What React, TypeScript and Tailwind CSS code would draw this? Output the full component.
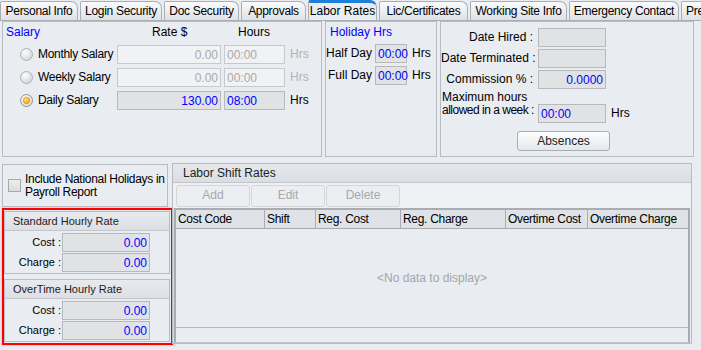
import React from "react";

const tabs = [
  { label: "Personal Info", w: "w-[78px]" },
  { label: "Login Security", w: "w-[82px]" },
  { label: "Doc Security", w: "w-[75px]" },
  { label: "Approvals", w: "w-[65px]" },
  { label: "Labor Rates", w: "w-[69px]", active: true },
  { label: "Lic/Certificates", w: "w-[89px]" },
  { label: "Working Site Info", w: "w-[97px]" },
  { label: "Emergency Contact", w: "w-[110px]" },
  { label: "Pre", w: "w-[40px]" },
];

function Field({
  w,
  value,
  kind,
  align = "right",
}: {
  w: string;
  value: string;
  kind: "off" | "on";
  align?: "left" | "right";
}) {
  const base =
    kind === "off"
      ? "bg-[#f1f2f3] border-[#c6c9ce] text-[#a9abae]"
      : "bg-[#e1e2e3] border-[#b6b9be] text-[#0000ff]";
  return (
    <div
      className={`${w} shrink-0 h-[19px] border ${base} flex items-center px-[2px] ${
        align === "right" ? "justify-end" : "justify-start"
      } leading-none text-[12px]`}
    >
      {value}
    </div>
  );
}

function Radio({ checked, disabled }: { checked?: boolean; disabled?: boolean }) {
  return (
    <svg width="13" height="13" viewBox="0 0 13 13" className="shrink-0">
      <defs>
        <radialGradient id={checked ? "rg1" : "rg0"} cx="40%" cy="35%" r="70%">
          <stop offset="0%" stopColor="#ffffff" />
          <stop offset="100%" stopColor={disabled ? "#cfd1d4" : "#d8dadd"} />
        </radialGradient>
        <radialGradient id="dot" cx="40%" cy="35%" r="70%">
          <stop offset="0%" stopColor="#ffe27a" />
          <stop offset="100%" stopColor="#f0a500" />
        </radialGradient>
      </defs>
      <circle
        cx="6.5"
        cy="6.5"
        r="6"
        fill={`url(#${checked ? "rg1" : "rg0"})`}
        stroke={disabled ? "#b0b2b6" : "#8f9399"}
        strokeWidth="1"
      />
      {checked && <circle cx="6.5" cy="6.5" r="3.2" fill="url(#dot)" stroke="#d48a00" strokeWidth="0.6" />}
    </svg>
  );
}

function GroupBox({ title, rows }: { title: string; rows: [string, string][] }) {
  return (
    <div className="w-[166px] border border-[#b8bcc3] flex flex-col">
      <div className="h-[19px] bg-linear-to-b from-[#e8eaee] to-[#dcdfe4] border-b border-[#c3c7cd] flex items-center pl-[8px] text-[#222] whitespace-nowrap">
        {title}
      </div>
      <div className="flex flex-col gap-[1px] pt-[2px] pb-[1px]">
        {rows.map(([l, v]) => (
          <div key={l} className="flex items-center h-[19px]">
            <div className="w-[57px] text-right pr-[1px] whitespace-nowrap">{l}</div>
            <Field w="w-[88px]" value={v} kind="on" />
          </div>
        ))}
      </div>
    </div>
  );
}

export default function App() {
  return (
    <div className="w-[701px] h-[350px] overflow-hidden bg-[#e9ecf0] font-['Liberation_Sans',Arial,sans-serif] text-[11px] text-black leading-[13px] select-none">
      {/* tabs */}
      <div className="h-[21px] flex items-end gap-[2px] border-b border-[#a9aeb5] overflow-hidden">
        {tabs.map((t) =>
          t.active ? (
            <div
              key={t.label}
              className={`${t.w} shrink-0 h-[21px] -mb-px bg-[#e9ecf0] border border-b-0 border-[#a9aeb5] border-t-[3px] border-t-[#1f7fd8] rounded-tr-[7px] rounded-tl-[2px] flex items-center justify-center pb-[1px] whitespace-nowrap text-[12px]`}
            >
              {t.label}
            </div>
          ) : (
            <div
              key={t.label}
              className={`${t.w} shrink-0 h-[19px] bg-linear-to-b from-[#fbfbfc] to-[#dde1e6] border border-b-0 border-[#a9aeb5] rounded-tr-[7px] rounded-tl-[2px] flex items-center ${
                t.label === "Pre" ? "justify-start pl-[4px]" : "justify-center"
              } pt-[1px] whitespace-nowrap text-[12px] tracking-[-0.3px]`}
            >
              {t.label}
            </div>
          )
        )}
      </div>

      {/* top row */}
      <div className="flex gap-[3px] pl-[2px]">
        {/* Salary */}
        <div className="w-[320px] h-[136px] border border-[#b8bcc3] flex flex-col">
          <div className="flex h-[13px] mt-[4px] whitespace-nowrap text-[12px]">
            <div className="w-[149px] pl-[3px] text-[#0000ff]">Salary</div>
            <div className="w-[86px]">Rate $</div>
            <div>Hours</div>
          </div>
          <div className="flex flex-col gap-[4px] mt-[6px]">
            {[
              ["Monthly Salary", "0.00", "00:00", false],
              ["Weekly Salary", "0.00", "00:00", false],
              ["Daily Salary", "130.00", "08:00", true],
            ].map(([l, r, h, on]) => (
              <div key={l as string} className="flex items-center h-[19px]">
                <div className="ml-[17px] mr-[5px] flex">
                  <Radio checked={on as boolean} disabled={!on} />
                </div>
                <div className="w-[79px] text-[12px] whitespace-nowrap tracking-[-0.3px]">{l}</div>
                <Field w="w-[104px]" value={r as string} kind={on ? "on" : "off"} />
                <div className="w-[3px]" />
                <Field w="w-[61px]" value={h as string} kind={on ? "on" : "off"} align="left" />
                <div className={`ml-[5px] text-[12px] ${on ? "text-black" : "text-[#b1b3b6]"}`}>Hrs</div>
              </div>
            ))}
          </div>
        </div>

        {/* Holiday */}
        <div className="w-[112px] h-[136px] border border-[#b8bcc3] flex flex-col">
          <div className="mt-[4px] pl-[4px] text-[#0000ff] text-[12px] h-[13px] whitespace-nowrap">Holiday Hrs</div>
          <div className="flex flex-col gap-[3px] mt-[5px]">
            {["Half Day", "Full Day"].map((l) => (
              <div key={l} className="flex items-center h-[19px]">
                <div className="w-[49px] text-right pr-[3px] text-[12px] whitespace-nowrap">{l}</div>
                <Field w="w-[32px]" value="00:00" kind="on" align="left" />
                <div className="ml-[5px] text-[12px]">Hrs</div>
              </div>
            ))}
          </div>
        </div>

        {/* right */}
        <div className="w-[254px] h-[136px] border border-[#b8bcc3] flex flex-col">
          <div className="flex flex-col gap-[2px] mt-[6px]">
            {[
              ["Date Hired :", ""],
              ["Date Terminated :", ""],
              ["Commission % :", "0.0000"],
            ].map(([l, v]) => (
              <div key={l} className="flex items-center h-[19px]">
                <div className="w-[97px] text-right pr-[5px] text-[12px] whitespace-nowrap">{l}</div>
                <Field w="w-[68px]" value={v} kind="on" />
              </div>
            ))}
          </div>
          <div className="pl-[1px] text-[12px] mt-[2px] h-[13px] whitespace-nowrap">Maximum hours</div>
          <div className="flex h-[19px]">
            <div className="w-[97px] pl-[1px] text-[12px] whitespace-nowrap tracking-[-0.5px]">allowed in a week :</div>
            <Field w="w-[68px]" value="00:00" kind="on" align="left" />
            <div className="ml-[5px] text-[12px] self-center">Hrs</div>
          </div>
          <div className="flex mt-[8px] pl-[76px]">
            <div className="w-[93px] h-[20px] rounded-[3px] border border-[#a9aeb6] bg-linear-to-b from-[#fdfdfd] to-[#e4e7eb] flex items-center justify-center text-[#222] text-[12px]">
              Absences
            </div>
          </div>
        </div>
      </div>

      {/* bottom row */}
      <div className="flex pl-[2px] mt-[6px]">
        <div className="w-[170px] flex flex-col">
          <div className="w-[166px] h-[43px] mt-[1px] border border-[#b8bcc3] flex items-center">
            <div className="ml-[5px] w-[13px] h-[13px] border border-[#a6a9ad] bg-linear-to-b from-[#eeeeee] to-[#dcdcdc] shrink-0" />
            <div className="ml-[4px] text-[12px] leading-[13px] whitespace-nowrap tracking-[-0.3px]">
              Include National Holidays in
              <br />
              Payroll Report
            </div>
          </div>
          <div className="mt-[1px] w-[171px] h-[137px] border-2 border-[#ff0000] shadow-[0_0_2px_#ff9090] flex flex-col gap-[5px] pt-[1px]">
            <GroupBox title="Standard Hourly Rate" rows={[["Cost :", "0.00"], ["Charge :", "0.00"]]} />
            <GroupBox title="OverTime Hourly Rate" rows={[["Cost :", "0.00"], ["Charge :", "0.00"]]} />
          </div>
        </div>

        {/* Labor shift rates */}
        <div className="w-[520px] h-[181px] border border-[#b8bcc3] flex flex-col">
          <div className="h-[19px] bg-linear-to-b from-[#e6e8ec] to-[#dadde2] border-b border-[#c3c7cd] flex items-center pl-[10px] text-[#222] text-[12px]">
            Labor Shift Rates
          </div>
          <div className="h-[25px] flex items-center gap-[1px] pl-[3px] bg-[#eef0f3]">
            {["Add", "Edit", "Delete"].map((b) => (
              <div
                key={b}
                className="w-[74px] h-[22px] rounded-[3px] border border-[#d3d6db] bg-[#eceef1] flex items-center justify-center text-[#a6a9ae] text-[12px]"
              >
                {b}
              </div>
            ))}
          </div>
          <div className="mx-[1px] flex-1 flex flex-col border-t-2 border-x-2 border-[#a9adb3] border-b border-b-[#c0c3c8]">
            <div className="h-[19px] flex bg-[#dfe2e7] border-b border-[#a9adb3] text-[12px] whitespace-nowrap tracking-[-0.3px]">
              {[
                ["Cost Code", "w-[89px]"],
                ["Shift", "w-[51px]"],
                ["Reg. Cost", "w-[85px]"],
                ["Reg. Charge", "w-[105px]"],
                ["Overtime Cost", "w-[82px]"],
                ["Overtime Charge", "flex-1"],
              ].map(([l, w], i) => (
                <div
                  key={l}
                  className={`${w} pl-[2px] flex items-center overflow-hidden ${i < 5 ? "border-r border-[#a9adb3]" : ""}`}
                >
                  {l}
                </div>
              ))}
            </div>
            <div className="h-[99px] flex items-center justify-center text-[#a3a6ab] text-[12px] border-b border-[#b4b8be]">
              &lt;No data to display&gt;
            </div>
            <div className="flex-1" />
          </div>
        </div>
      </div>
    </div>
  );
}
